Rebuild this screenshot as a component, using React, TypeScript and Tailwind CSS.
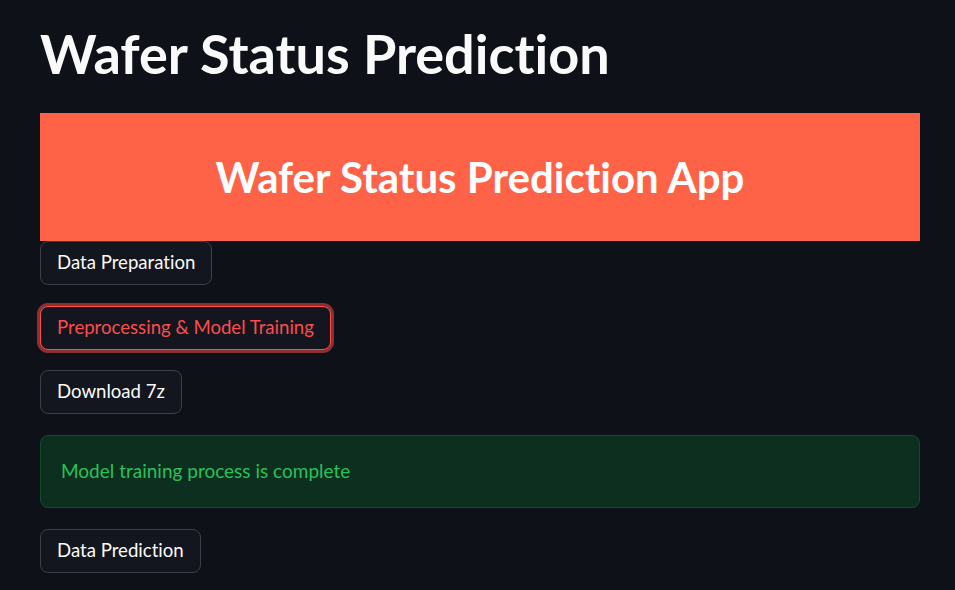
export default function App() {
  const font = { fontFamily: '"Lato", "Noto Sans", sans-serif' };
  const btn =
    'h-[44px] px-4 rounded-lg border border-[#3d3f46] bg-[#13161e] text-[18.6px] text-[#fafafa] flex items-center';

  return (
    <div
      className="min-h-[590px] w-full bg-[#0e1117] pl-10 pr-[35px] pt-[21px] [font-variant-ligatures:none]"
      style={font}
    >
      <h1 className="text-[54px] leading-[66px] font-bold text-[#fafafa]">Wafer Status Prediction</h1>

      <div className="mt-[26px] h-[128px] bg-[#ff6347] flex items-center justify-center">
        <h2 className="text-[42px] font-bold text-white">Wafer Status Prediction App</h2>
      </div>

      <div className="flex flex-col items-start">
        <button className={btn}>Data Preparation</button>

        <button className="mt-[21px] h-[44px] px-4 rounded-lg border border-[#ff4b4b] bg-[#13161e] text-[18.6px] text-[#ff4b4b] flex items-center ring-[3px] ring-[#8c2f33]">
          Preprocessing &amp; Model Training
        </button>

        <button className={`mt-[20px] ${btn}`}>Download 7z</button>

        <div className="mt-[21px] w-full h-[73px] rounded-lg bg-[#0d2f1f] border border-[#14492a] flex items-center px-[20px]">
          <span className="text-[19px] text-[#26c25a]">Model training process is complete</span>
        </div>

        <button className={`mt-[21px] ${btn}`}>Data Prediction</button>
      </div>
    </div>
  );
}
